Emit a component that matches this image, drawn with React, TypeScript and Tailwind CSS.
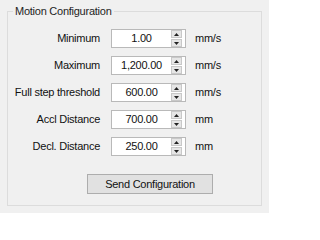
const rows = [
  { label: "Minimum", value: "1.00", unit: "mm/s" },
  { label: "Maximum", value: "1,200.00", unit: "mm/s" },
  { label: "Full step threshold", value: "600.00", unit: "mm/s" },
  { label: "Accl Distance", value: "700.00", unit: "mm" },
  { label: "Decl. Distance", value: "250.00", unit: "mm" },
];

const Spinner = () => (
  <div className="flex flex-col w-[11px] h-[17px] my-auto mr-[3px] gap-[1px]">
    <div className="flex-1 flex items-center justify-center bg-[#e6e6e6] border border-[#c8c8c8]">
      <svg width="5" height="3" viewBox="0 0 5 3">
        <path d="M0 3 L2.5 0 L5 3 Z" fill="#222" />
      </svg>
    </div>
    <div className="flex-1 flex items-center justify-center bg-[#e6e6e6] border border-[#c8c8c8]">
      <svg width="5" height="3" viewBox="0 0 5 3">
        <path d="M0 0 L2.5 3 L5 0 Z" fill="#222" />
      </svg>
    </div>
  </div>
);

export default function App() {
  return (
    <div
      className="w-[269px] h-[213px] bg-[#f0f0f0] text-[11px] tracking-[-0.25px] text-[#111] pt-[4px] px-[7px] overflow-hidden"
      style={{ fontFamily: '"Liberation Sans", Arial, sans-serif' }}
    >
      <fieldset className="border border-[#dcdcdc] h-[202px] px-0 pt-[10px] m-0">
        <legend className="ml-[5px] px-[2px] leading-[14px] text-[#1e1e1e]">Motion Configuration</legend>
        <div className="flex flex-col gap-[8px] mt-[1px]">
          {rows.map((r) => (
            <div key={r.label} className="flex items-center h-[19px]">
              <div className="w-[93px] text-right pr-[1px] leading-none whitespace-nowrap">{r.label}</div>
              <div className="ml-[10px] w-[75px] h-[19px] flex bg-white border border-[#b9b9b9]">
                <div className="flex-1 flex items-center justify-center leading-none">{r.value}</div>
                <Spinner />
              </div>
              <div className="ml-[9px] leading-none">{r.unit}</div>
            </div>
          ))}
        </div>
        <div className="mt-[18px] ml-[79px]">
          <button
            type="button"
            className="w-[126px] h-[20px] bg-[#e1e1e1] border border-[#adadad] leading-none text-[11px] tracking-[-0.25px] text-[#111]"
          >
            Send Configuration
          </button>
        </div>
      </fieldset>
    </div>
  );
}
